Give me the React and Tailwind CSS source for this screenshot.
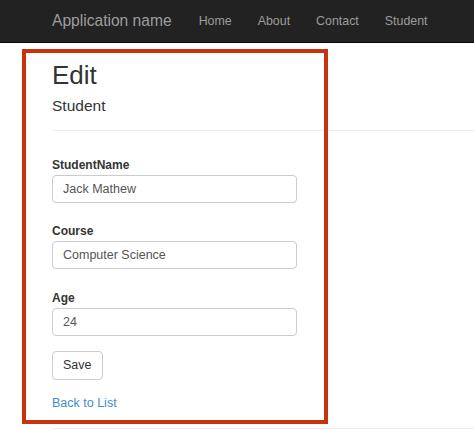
import React from "react";

const links = ["Home", "About", "Contact", "Student"];

const Field = ({ label, value, className }) => {
  return (
    <div className={className}>
      <label className="block text-[12px] leading-[17px] font-bold text-[#333] mb-[1px]">
        {label}
      </label>
      <input
        type="text"
        defaultValue={value}
        className="block w-[245px] h-[28px] px-[10px] text-[12.5px] text-[#555] bg-white border border-[#ccc] rounded-[4px] outline-none"
      />
    </div>
  );
};

const App = () => {
  return (
    <div className="relative w-[474px] h-[434px] overflow-hidden bg-white font-['Liberation_Sans',Arial,sans-serif]">
      <nav className="h-[43px] bg-[#222] border-b border-[#080808] flex items-center pl-[52px]">
        <span className="text-[15.6px] text-[#9d9d9d] mr-[14px]">
          Application name
        </span>
        {links.map((l) => (
          <a key={l} href="#" className="px-[13px] text-[12.4px] text-[#9d9d9d]">
            {l}
          </a>
        ))}
      </nav>

      <div className="pl-[52px]">
        <h2 className="mt-[19px] text-[26px] leading-[26px] text-[#333]">Edit</h2>
        <h4 className="mt-[10px] text-[15.5px] leading-[15px] text-[#333]">Student</h4>
        <hr className="mt-[17px] border-t border-[#eee]" />

        <form>
          <Field label="StudentName" value="Jack Mathew" className="mt-[26px]" />
          <Field label="Course" value="Computer Science" className="mt-[20px]" />
          <Field label="Age" value="24" className="mt-[21px]" />

          <button
            type="button"
            className="mt-[15px] h-[29px] px-[10px] text-[12.5px] text-[#333] bg-white border border-[#ccc] rounded-[4px]"
          >
            Save
          </button>
        </form>

        <a href="#" className="block mt-[14px] text-[12.5px] leading-[18px] text-[#428bca]">
          Back to List
        </a>
        <hr className="mt-[16px] border-t border-[#eee]" />
      </div>

      {/* annotation frame drawn over the form */}
      <div className="absolute left-[22px] top-[49px] w-[306px] h-[375px] border-[4px] border-[#c8320f] pointer-events-none" />
    </div>
  );
};

export default App;
